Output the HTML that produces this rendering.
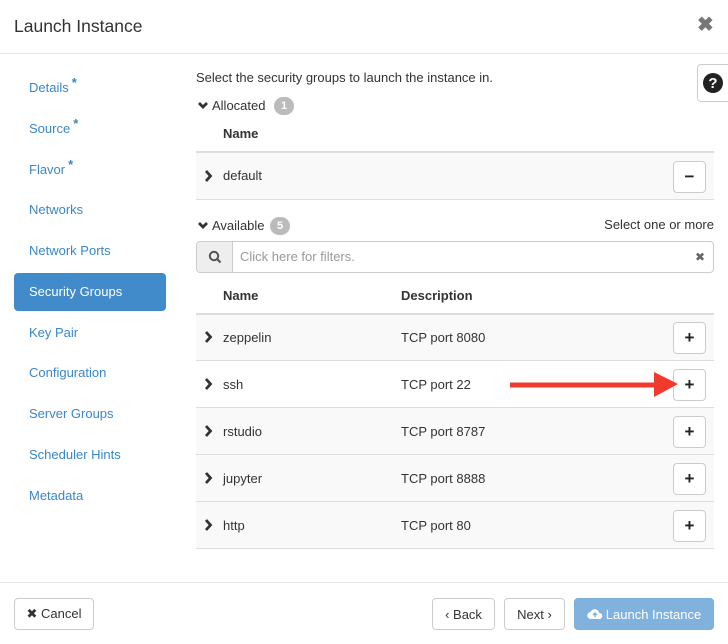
<!DOCTYPE html>
<html><head><meta charset="utf-8"><style>
*{box-sizing:border-box;margin:0;padding:0}
body{width:728px;height:644px;background:#fff;font-family:"Liberation Sans",sans-serif;font-size:13px;color:#333;position:relative;overflow:hidden}
.a{position:absolute}
.nav{position:absolute;left:29px;color:#3a87c8;font-size:13px;line-height:15px}
.nav i{font-style:normal;position:absolute;top:-5px;margin-left:3px;font-weight:bold}
.btn{position:absolute;border:1px solid #ccc;border-radius:4px;background:#fff;font-size:13px;color:#333;display:flex;align-items:center;justify-content:center}
.row{position:absolute;left:196px;width:518px;height:47px;border-bottom:1px solid #ddd}
.chev{position:absolute;left:8px;top:17px;width:9px;height:12px}
.plus{position:absolute;left:477px;top:8px;width:33px;height:32px;border:1px solid #ccc;border-radius:4px;background:#fff;font-weight:bold;font-size:17px;display:flex;align-items:center;justify-content:center;color:#222}
</style></head><body>
<div class="a" style="left:14px;top:16px;font-size:17.5px;color:#333">Launch Instance</div>
<div class="a" style="left:697px;top:12px;font-size:20px;color:#777;font-weight:bold">✖</div>
<div class="a" style="left:0;top:53px;width:728px;height:1px;background:#e5e5e5"></div>

<div class="nav" style="top:80px">Details<i>*</i></div>
<div class="nav" style="top:121px">Source<i>*</i></div>
<div class="nav" style="top:162px">Flavor<i>*</i></div>
<div class="nav" style="top:202px">Networks</div>
<div class="nav" style="top:243px">Network Ports</div>
<div class="a" style="left:14px;top:273px;width:152px;height:38px;background:#428bca;border-radius:4px"></div>
<div class="nav" style="top:284px;color:#fff">Security Groups</div>
<div class="nav" style="top:325px">Key Pair</div>
<div class="nav" style="top:365px">Configuration</div>
<div class="nav" style="top:406px">Server Groups</div>
<div class="nav" style="top:447px">Scheduler Hints</div>
<div class="nav" style="top:488px">Metadata</div>

<div class="a" style="left:196px;top:70px">Select the security groups to launch the instance in.</div>
<div class="btn" style="left:697px;top:64px;width:32px;height:38px;border-radius:4px 0 0 4px">
<svg width="20" height="20" viewBox="0 0 20 20"><circle cx="10" cy="10" r="10" fill="#222"/><text x="10" y="15" text-anchor="middle" fill="#fff" font-family="Liberation Sans" font-weight="bold" font-size="15">?</text></svg></div>

<svg class="a" style="left:197px;top:101px" width="12" height="10" viewBox="0 0 12 10"><path d="M2 2l4 4 4-4" stroke="#333" stroke-width="2.8" fill="none"/></svg>
<div class="a" style="left:212px;top:98px">Allocated</div>
<div class="a" style="left:274px;top:97px;width:20px;height:18px;border-radius:9px;background:#bbb;color:#fff;font-size:11px;font-weight:bold;text-align:center;line-height:18px">1</div>
<div class="a" style="left:223px;top:126px;font-weight:bold">Name</div>
<div class="row" style="top:151px;border-top:2px solid #ddd;background:#f9f9f9;height:49px">
<svg class="chev" viewBox="0 0 9 12"><path d="M2 1l4.5 5-4.5 5" stroke="#333" stroke-width="2.8" fill="none"/></svg>
<div class="a" style="left:27px;top:15px">default</div>
<div class="plus" style="top:8px">−</div></div>

<svg class="a" style="left:197px;top:221px" width="12" height="10" viewBox="0 0 12 10"><path d="M2 2l4 4 4-4" stroke="#333" stroke-width="2.8" fill="none"/></svg>
<div class="a" style="left:212px;top:218px">Available</div>
<div class="a" style="left:270px;top:217px;width:20px;height:18px;border-radius:9px;background:#bbb;color:#fff;font-size:11px;font-weight:bold;text-align:center;line-height:18px">5</div>
<div class="a" style="right:14px;top:217px">Select one or more</div>

<div class="a" style="left:196px;top:241px;width:518px;height:32px;border:1px solid #ccc;border-radius:4px"></div>
<div class="a" style="left:197px;top:242px;width:36px;height:30px;background:#eee;border-right:1px solid #ccc;border-radius:3px 0 0 3px"></div>
<svg class="a" style="left:208px;top:250px" width="14" height="14" viewBox="0 0 14 14"><circle cx="6" cy="6" r="4.2" stroke="#555" stroke-width="2" fill="none"/><path d="M9 9l3.5 3.5" stroke="#555" stroke-width="2.2"/></svg>
<div class="a" style="left:240px;top:249px;color:#999">Click here for filters.</div>
<div class="a" style="left:695px;top:250px;color:#666;font-size:12px">✖</div>

<div class="a" style="left:223px;top:288px;font-weight:bold">Name</div>
<div class="a" style="left:401px;top:288px;font-weight:bold">Description</div>
<div class="a" style="left:196px;top:313px;width:518px;height:2px;background:#ddd"></div>

<div class="row" style="top:315px;background:#f9f9f9;height:46px"><svg class="chev" style="top:16px" viewBox="0 0 9 12"><path d="M2 1l4.5 5-4.5 5" stroke="#333" stroke-width="2.8" fill="none"/></svg><div class="a" style="left:27px;top:15px">zeppelin</div><div class="a" style="left:205px;top:15px">TCP port 8080</div><div class="plus" style="top:7px">+</div></div>
<div class="row" style="top:361px"><svg class="chev" viewBox="0 0 9 12"><path d="M2 1l4.5 5-4.5 5" stroke="#333" stroke-width="2.8" fill="none"/></svg><div class="a" style="left:27px;top:16px">ssh</div><div class="a" style="left:205px;top:16px">TCP port 22</div><div class="plus">+</div></div>
<div class="row" style="top:408px;background:#f9f9f9"><svg class="chev" viewBox="0 0 9 12"><path d="M2 1l4.5 5-4.5 5" stroke="#333" stroke-width="2.8" fill="none"/></svg><div class="a" style="left:27px;top:16px">rstudio</div><div class="a" style="left:205px;top:16px">TCP port 8787</div><div class="plus">+</div></div>
<div class="row" style="top:455px;background:#f9f9f9"><svg class="chev" viewBox="0 0 9 12"><path d="M2 1l4.5 5-4.5 5" stroke="#333" stroke-width="2.8" fill="none"/></svg><div class="a" style="left:27px;top:16px">jupyter</div><div class="a" style="left:205px;top:16px">TCP port 8888</div><div class="plus">+</div></div>
<div class="row" style="top:502px;background:#f9f9f9"><svg class="chev" viewBox="0 0 9 12"><path d="M2 1l4.5 5-4.5 5" stroke="#333" stroke-width="2.8" fill="none"/></svg><div class="a" style="left:27px;top:16px">http</div><div class="a" style="left:205px;top:16px">TCP port 80</div><div class="plus">+</div></div>

<svg class="a" style="left:508px;top:370px" width="172" height="30" viewBox="0 0 172 30"><path d="M2 15H150" stroke="#f03a2e" stroke-width="5"/><path d="M146 2L170 14 146 27z" fill="#f03a2e"/></svg>

<div class="a" style="left:0;top:582px;width:728px;height:1px;background:#e5e5e5"></div>
<div class="btn" style="left:14px;top:598px;width:80px;height:32px">✖&nbsp;Cancel</div>
<div class="btn" style="left:432px;top:598px;width:63px;height:32px">‹ Back</div>
<div class="btn" style="left:504px;top:598px;width:61px;height:32px">Next ›</div>
<div class="btn" style="left:574px;top:598px;width:140px;height:32px;background:#80b2dd;border-color:#7ab0dd;color:#fff">
<svg width="16" height="12" viewBox="0 0 16 12" style="margin-right:3px"><path d="M4 11a3.5 3.5 0 0 1-.5-7 4.5 4.5 0 0 1 8.6 1A3 3 0 0 1 12.5 11z" fill="#fff"/><path d="M8 9V5M6 7l2-2 2 2" stroke="#80b2dd" stroke-width="1.5" fill="none"/></svg>Launch Instance</div>
</body></html>
